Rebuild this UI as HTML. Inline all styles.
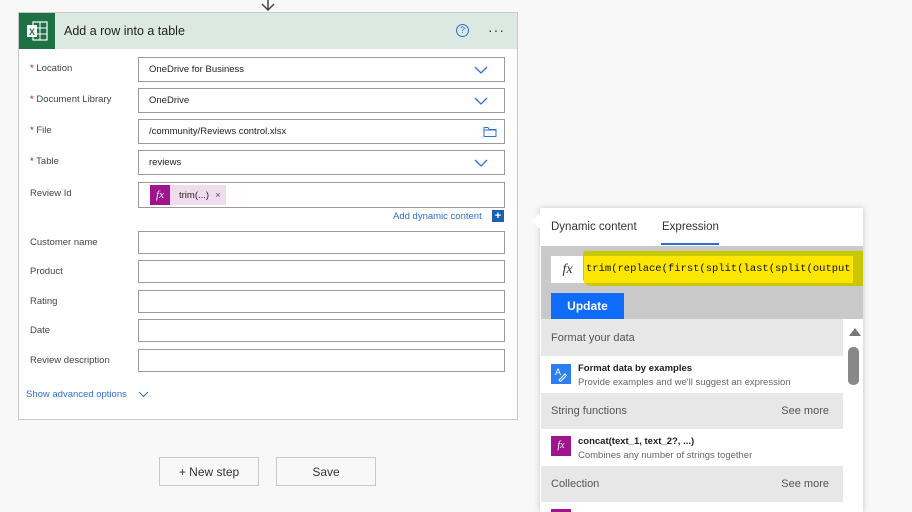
<!DOCTYPE html>
<html><head><style>
*{box-sizing:border-box;margin:0;padding:0}
body{width:912px;height:512px;background:#f8f8f8;font-family:"Liberation Sans",sans-serif;font-size:10px;color:#222;position:relative;overflow:hidden}
.a{position:absolute}
.card{left:18px;top:12px;width:500px;height:408px;background:#fff;border:1px solid #c8c8c8}
.hdr{left:19px;top:13px;width:498px;height:36px;background:#dbe9e2}
.lbl{left:30px;font-size:9.5px;color:#444}
.lbl b{color:#c00;font-weight:normal}
.inp{left:138px;width:367px;border:1px solid #9a9a9a;background:#fff;font-size:9.5px;padding-left:10px;display:flex;align-items:center;color:#222}
.chev{position:absolute;right:16px;top:8px}
.btn{border:1px solid #c8c8c8;background:#f8f8f8;font-size:12px;display:flex;align-items:center;justify-content:center;color:#333}
.sec{left:541px;width:302px;background:#e6e7e6;font-size:11px;color:#555;padding-left:10px;display:flex;align-items:center}
.sec span{position:absolute;right:14px}
.item{left:541px;width:302px;background:#fff}
.ic{position:absolute;left:10px;width:20px;height:20px}
.t1{position:absolute;left:37px;font-size:9.5px;font-weight:bold;color:#222}
.t2{position:absolute;left:37px;font-size:9.5px;color:#666}
</style></head><body>
<svg class="a" style="left:259px;top:0" width="18" height="12"><path d="M9 0v10M3 4l6 6 6-6" stroke="#444" stroke-width="1.5" fill="none"/></svg>
<div class="a card"></div>
<div class="a hdr"></div>
<div class="a" style="left:19px;top:13px;width:36px;height:36px;background:#1e7145"></div>
<svg class="a" style="left:26px;top:21px" width="22" height="20"><rect x="7" y="1" width="14" height="18" fill="none" stroke="#fff" stroke-width="1.2"/><path d="M7 7h14M7 13h14M14 1v18" stroke="#fff" stroke-width="1"/><rect x="1" y="4" width="10" height="12" fill="#fff"/><text x="3" y="14" font-size="9" font-family="Liberation Sans" font-weight="bold" fill="#1e7145">X</text></svg>
<div class="a" style="left:64px;top:24px;font-size:12.5px;color:#222">Add a row into a table</div>
<div class="a" style="left:456px;top:24px;width:13px;height:13px;border:1.3px solid #2a6fdb;border-radius:50%;font-size:9px;color:#2a6fdb;text-align:center;line-height:11px">?</div>
<div class="a" style="left:488px;top:22px;font-size:14px;letter-spacing:1px;color:#333">···</div>

<div class="a lbl" style="top:63px"><b>* </b>Location</div>
<div class="a lbl" style="top:94px"><b>* </b>Document Library</div>
<div class="a lbl" style="top:125px"><b>* </b>File</div>
<div class="a lbl" style="top:156px"><b>* </b>Table</div>
<div class="a lbl" style="top:188px">Review Id</div>

<div class="a inp" style="top:57px;height:25px">OneDrive for Business<svg class="chev" width="14" height="8"><path d="M1 1l6 6 6-6" stroke="#2a6fdb" fill="none" stroke-width="1.3"/></svg></div>
<div class="a inp" style="top:88px;height:25px">OneDrive<svg class="chev" width="14" height="8"><path d="M1 1l6 6 6-6" stroke="#2a6fdb" fill="none" stroke-width="1.3"/></svg></div>
<div class="a inp" style="top:119px;height:25px">/community/Reviews control.xlsx<svg class="chev" style="top:6px;right:7px" width="14" height="12"><path d="M1 1.5h4l1 2h7v7H1z M1 4h12" stroke="#2a6fdb" fill="none" stroke-width="1"/></svg></div>
<div class="a inp" style="top:150px;height:25px">reviews<svg class="chev" width="14" height="8"><path d="M1 1l6 6 6-6" stroke="#2a6fdb" fill="none" stroke-width="1.3"/></svg></div>
<div class="a inp" style="top:182px;height:26px;padding-left:11px"><div style="width:76px;height:20px;background:#f1dcee;display:flex;align-items:center"><div style="width:20px;height:20px;background:#a0148e;color:#fff;font-family:'Liberation Serif';font-style:italic;font-size:11px;text-align:center;line-height:20px">fx</div><span style="margin-left:9px">trim(...)</span><span style="margin-left:6px;color:#555">×</span></div></div>
<div class="a" style="left:393px;top:211px;font-size:9.5px;color:#2a6fdb">Add dynamic content</div>
<div class="a" style="left:492px;top:210px;width:12px;height:12px;background:#1b5fb3;color:#fff;font-size:11px;line-height:12px;text-align:center;font-weight:bold">+</div>

<div class="a lbl" style="top:237px">Customer name</div>
<div class="a lbl" style="top:266px">Product</div>
<div class="a lbl" style="top:296px">Rating</div>
<div class="a lbl" style="top:325px">Date</div>
<div class="a lbl" style="top:355px">Review description</div>
<div class="a inp" style="top:231px;height:23px"></div>
<div class="a inp" style="top:260px;height:23px"></div>
<div class="a inp" style="top:290px;height:23px"></div>
<div class="a inp" style="top:319px;height:23px"></div>
<div class="a inp" style="top:349px;height:23px"></div>
<div class="a" style="left:26px;top:389px;font-size:9.5px;color:#2a6fdb">Show advanced options</div>
<svg class="a" style="left:138px;top:391px" width="11" height="7"><path d="M1 1l4.5 4.5L10 1" stroke="#2a6fdb" fill="none"/></svg>

<div class="a btn" style="left:159px;top:457px;width:100px;height:29px">+ New step</div>
<div class="a btn" style="left:276px;top:457px;width:100px;height:29px">Save</div>

<div class="a" style="left:540px;top:208px;width:323px;height:304px;background:#fff;box-shadow:0 0 6px rgba(0,0,0,.2)"></div>
<div class="a" style="left:534px;top:216px;width:10px;height:10px;background:#fff;transform:rotate(45deg)"></div>
<div class="a" style="left:551px;top:221px;font-size:11.5px;color:#333">Dynamic content</div>
<div class="a" style="left:662px;top:221px;font-size:11.5px;color:#333">Expression</div>
<div class="a" style="left:661px;top:243px;width:58px;height:2px;background:#2a6fdb"></div>
<div class="a" style="left:541px;top:246px;width:322px;height:73px;background:#c8c9c8"></div>
<div class="a" style="left:551px;top:256px;width:33px;height:27px;background:#fff;font-family:'Liberation Serif';font-style:italic;font-size:14px;color:#333;text-align:center;line-height:27px">fx</div>
<div class="a" style="left:583px;top:251px;width:280px;height:35px;background:#c9c800;border-radius:3px 0 0 8px"></div>
<div class="a" style="left:584px;top:256px;width:269px;height:27px;background:#fce600;font-family:'Liberation Mono',monospace;font-size:10.5px;line-height:27px;padding-left:2px;color:#111;white-space:nowrap;overflow:hidden">trim(replace(first(split(last(split(output</div>
<div class="a" style="left:551px;top:293px;width:73px;height:26px;background:#0f6cfb;color:#fff;font-size:12px;font-weight:bold;text-align:center;line-height:26px">Update</div>

<div class="a sec" style="top:319px;height:37px">Format your data</div>
<div class="a item" style="top:356px;height:37px"><div class="ic" style="top:8px;background:#2b7ff0"><svg width="20" height="20"><text x="4" y="11" font-size="9" font-family="Liberation Sans" fill="#fff">A</text><path d="M8 16l6-6 1.5 1.5-6 6z" stroke="#fff" fill="none" stroke-width="1"/></svg></div><div class="t1" style="top:7px">Format data by examples</div><div class="t2" style="top:21px">Provide examples and we'll suggest an expression</div></div>
<div class="a sec" style="top:393px;height:36px">String functions<span>See more</span></div>
<div class="a item" style="top:429px;height:37px"><div class="ic" style="top:7px;background:#a0148e;color:#fff;font-family:'Liberation Serif';font-style:italic;font-size:10px;text-align:center;line-height:20px">fx</div><div class="t1" style="top:7px">concat(text_1, text_2?, ...)</div><div class="t2" style="top:21px">Combines any number of strings together</div></div>
<div class="a sec" style="top:466px;height:36px">Collection<span>See more</span></div>
<div class="a" style="left:551px;top:509px;width:20px;height:3px;background:#a0148e"></div>
<div class="a" style="left:849px;top:328px;width:0;height:0;border-left:6px solid transparent;border-right:6px solid transparent;border-bottom:8px solid #777"></div>
<div class="a" style="left:848px;top:347px;width:11px;height:38px;background:#888;border-radius:5px"></div>
</body></html>
